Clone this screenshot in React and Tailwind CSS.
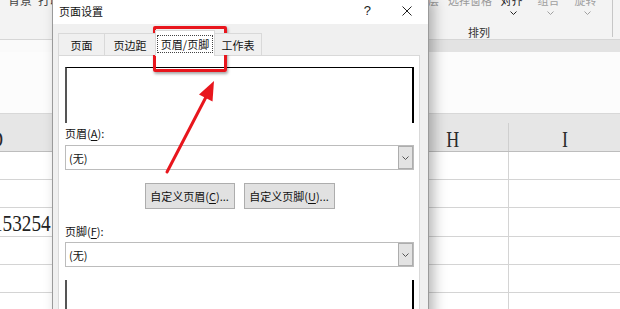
import React from 'react';

function Chevron({ className = '' }) {
  return (
    <svg width="7" height="4" viewBox="0 0 7 4" className={className}>
      <polyline points="0.5,0.5 3.5,3.5 6.5,0.5" fill="none" stroke="currentColor" strokeWidth="1" />
    </svg>
  );
}

function SelectBox() {
  return (
    <div className="flex h-[25px] border border-[#bcbcbc] bg-white">
      <div className="flex flex-1 items-center pl-[3px] text-[11px] leading-[14px]">(无)</div>
      <div className="flex w-[15px] items-center justify-center border border-[#adadad] bg-[#e3e3e3] text-[#555]">
        <Chevron />
      </div>
    </div>
  );
}

const rows = [28, 28, 29, 28, 28, 28];

export default function App() {
  return (
    <div className="relative h-[309px] w-[620px] overflow-hidden bg-white font-['Noto_Sans_CJK_SC','Noto_Sans',sans-serif] text-[11px] text-[#111]">
      {/* Excel ribbon behind the dialog */}
      <div className="flex h-[40px] border-b border-[#d6d6d6] bg-[#f3f3f3]">
        <div className="-mt-[7px] flex w-[428px] gap-[6px] pl-[8px] text-[12px] leading-[14px] text-[#444]">
          <span>背景</span>
          <span>打印</span>
        </div>
        <div className="flex w-[184px] flex-col">
          <div className="-mt-[6px] flex h-[24px] items-start text-[11px] leading-[12px]">
            <span className="w-[11px] text-[#9a9a9a]">层</span>
            <span className="ml-[9px] w-[45px] text-[#9a9a9a]">选择窗格</span>
            <div className="flex w-[37px] flex-col items-center text-[#222]">
              <span>对齐</span>
              <Chevron className="mt-[5px] ml-[3px]" />
            </div>
            <div className="flex w-[37px] flex-col items-center text-[#a0a0a0]">
              <span>组合</span>
              <Chevron className="mt-[5px] ml-[3px]" />
            </div>
            <div className="flex w-[37px] flex-col items-center text-[#a0a0a0]">
              <span>旋转</span>
              <Chevron className="mt-[5px] ml-[3px]" />
            </div>
          </div>
          <span className="mt-[8px] pl-[40px] text-[11px] leading-[12px] text-[#333]">排列</span>
        </div>
        <div className="mb-[2px] w-px bg-[#c6c6c6]" />
      </div>

      {/* Band under ribbon */}
      <div className="flex h-[12px]">
        <div className="w-[52px] bg-[#fafafa]" />
        <div className="flex-1 bg-[#e3e3e3]" />
      </div>
      <div className="h-[61px] bg-[#fcfcfc]" />

      {/* Column header */}
      <div className="flex h-[39px] border-t border-[#d8d8d8] border-b border-b-[#bdbdbd] bg-[#e6e6e6] font-['Liberation_Serif',serif] text-[24px] leading-[24px] text-[#2a2a2a]">
        <div className="w-[397px] overflow-hidden pt-[13px]">
          <span className="ml-[-10px] inline-block origin-left scale-x-75">D</span>
        </div>
        <div className="mt-[9px] flex w-[112px] justify-center border-r border-[#cfcfcf] pt-[4px]">
          <span className="inline-block scale-x-75">H</span>
        </div>
        <div className="flex flex-1 justify-center pt-[13px]">
          <span className="inline-block scale-x-75">I</span>
        </div>
      </div>

      {/* Grid rows */}
      {rows.map((h, i) => (
        <div key={i} className="flex border-b border-[#d4d4d4]" style={{ height: h }}>
          <div className="w-[397px] overflow-hidden pt-[3px] font-['Liberation_Serif',serif] text-[24px] leading-[24px] text-[#222]">
            {i === 2 && <span className="ml-[-7px] inline-block origin-left scale-x-[0.8]">153254</span>}
          </div>
          <div className="w-[112px] border-r border-[#d4d4d4]" />
          <div className="flex-1" />
        </div>
      ))}

      {/* Page setup dialog */}
      <div className="absolute left-[52px] top-0 flex h-[330px] w-[377px] flex-col border-x border-[#9a9a9a] bg-[#f0f0f0] shadow-[5px_0_12px_rgba(0,0,0,0.28)]">
        <div className="flex h-[24px] items-start bg-white pl-[6px] pt-[4px]">
          <span className="text-[11px] leading-[14px]">页面设置</span>
          <span className="ml-auto text-[13px] leading-[14px] font-['Liberation_Sans',sans-serif] text-[#222]">?</span>
          <svg width="10" height="10" viewBox="0 0 10 10" className="ml-[31px] mr-[16px] mt-[2px]">
            <path d="M0.5 0.5 L9.5 9.5 M9.5 0.5 L0.5 9.5" stroke="#222" strokeWidth="1" />
          </svg>
        </div>

        {/* Tabs */}
        <div className="relative z-10 flex h-[31px] items-end pl-[5px]">
          <div className="flex h-[22px] w-[46px] items-center justify-center border-l border-t border-[#d9d9d9] bg-[#f0f0f0] leading-[14px]">页面</div>
          <div className="flex h-[22px] w-[51px] items-center justify-center border-l border-t border-[#d9d9d9] bg-[#f0f0f0] leading-[14px]">页边距</div>
          <div className="-mb-px flex h-[26px] w-[60px] border-x border-t border-[#d9d9d9] bg-white px-[1px] pb-[3px] pt-[4px]">
            <span className="flex flex-1 items-center justify-center border border-dotted border-[#444] leading-[14px]">页眉/页脚</span>
          </div>
          <div className="flex h-[22px] w-[47px] items-center justify-center border-r border-t border-[#d9d9d9] bg-[#f0f0f0] leading-[14px]">工作表</div>
        </div>

        {/* Tab panel */}
        <div className="ml-[5px] flex w-[362px] flex-1 flex-col border border-[#d9d9d9] bg-white pl-[6px] pr-[5px]">
          <div className="mt-[11px] h-[56px] border-t border-black border-l-2 border-l-[#555] border-r-2 border-r-black" />
          <span className="mt-[3px] leading-[14px]">
            页眉(<span className="underline underline-offset-2">A</span>):
          </span>
          <div className="mt-[5px]">
            <SelectBox />
          </div>
          <div className="mt-[13px] flex justify-center gap-[9px]">
            <div className="flex h-[26px] w-[90px] items-center justify-center border border-[#adadad] bg-[#e1e1e1] leading-[14px]">
              自定义页眉(<span className="underline underline-offset-2">C</span>)...
            </div>
            <div className="flex h-[26px] w-[91px] items-center justify-center border border-[#adadad] bg-[#e1e1e1] leading-[14px]">
              自定义页脚(<span className="underline underline-offset-2">U</span>)...
            </div>
          </div>
          <span className="mt-[15px] leading-[14px]">
            页脚(<span className="underline underline-offset-2">F</span>):
          </span>
          <div className="mt-[4px]">
            <SelectBox />
          </div>
          <div className="mt-[13px] h-[40px] border-l-2 border-l-[#555] border-r-2 border-r-black" />
        </div>
      </div>

      {/* Red highlight box */}
      <div className="absolute left-[153px] top-[26px] h-[46px] w-[74px] rounded-[2px] border-[3px] border-[#e8161d] shadow-[1px_2px_3px_rgba(0,0,0,0.35)]" />

      {/* Red arrow */}
      <svg className="pointer-events-none absolute left-0 top-0" width="620" height="309" viewBox="0 0 620 309">
        <line x1="167" y1="172" x2="206" y2="97" stroke="#e8161d" strokeWidth="3" strokeLinecap="round" />
        <polygon points="214,81 212.5,101.5 199,94.5" fill="#e8161d" />
      </svg>
    </div>
  );
}
